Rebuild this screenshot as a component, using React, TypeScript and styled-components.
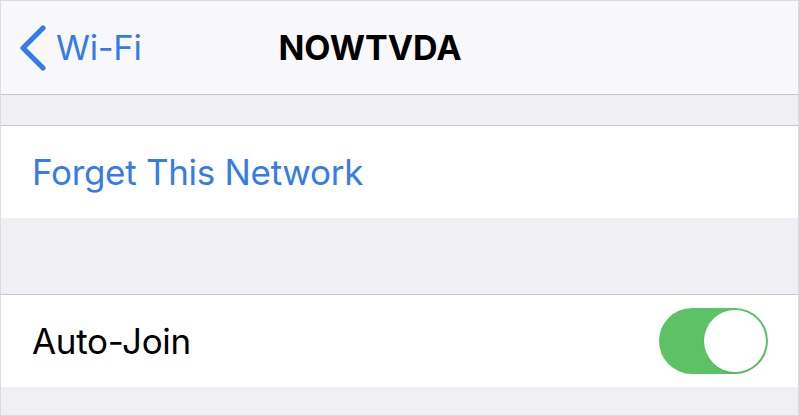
import React from "react";
import styled, { createGlobalStyle } from "styled-components";

const Global = createGlobalStyle`
  html, body { margin: 0; padding: 0; background: #ffffff; }
  body { font-family: Inter, "Noto Sans", Roboto, sans-serif; -webkit-font-smoothing: antialiased; }
`;

const Frame = styled.div`
  width: 799px;
  height: 416px;
  box-sizing: border-box;
  border: 1px solid #dcdce0;
  background: #efeff4;
  display: flex;
  flex-direction: column;
  overflow: hidden;
`;

const NavBar = styled.header`
  height: 93px;
  flex: none;
  background: #f8f8fa;
  border-bottom: 1px solid #c8c7cc;
  display: flex;
  align-items: center;
  padding-left: 18px;
  gap: 137px;
`;

const BackButton = styled.button`
  display: flex;
  align-items: center;
  gap: 7px;
  border: none;
  background: none;
  padding: 0;
  font: inherit;
  color: #367ce8;
  font-size: 34.5px;
  letter-spacing: -0.3px;
  cursor: pointer;
`;

const Title = styled.h1`
  margin: 0;
  font-size: 34px;
  font-weight: 700;
  color: #000;
  letter-spacing: 0;
`;

const Spacer = styled.div<{ $h: number; $line?: boolean }>`
  height: ${(p) => p.$h}px;
  flex: none;
  border-bottom: ${(p) => (p.$line ? "1px solid #c8c7cc" : "none")};
`;

const Row = styled.div`
  height: 92px;
  flex: none;
  background: #fff;
  display: flex;
  align-items: center;
  justify-content: space-between;
  padding: 0 30px 0 31px;
`;

const RowLabel = styled.span<{ $action?: boolean }>`
  font-size: 35px;
  color: ${(p) => (p.$action ? "#367ce8" : "#000")};
  letter-spacing: -0.3px;
`;

const Toggle = styled.div<{ $on: boolean }>`
  width: 109px;
  height: 66px;
  border-radius: 33px;
  background: ${(p) => (p.$on ? "#5dc166" : "#e5e5ea")};
  position: relative;
  flex: none;
`;

const Knob = styled.div<{ $on: boolean }>`
  position: absolute;
  top: 2px;
  left: ${(p) => (p.$on ? "45px" : "2px")};
  width: 62px;
  height: 62px;
  border-radius: 50%;
  background: #fff;
  box-shadow: 0 1px 2px rgba(0, 0, 0, 0.08);
`;

const Chevron = () => (
  <svg width="30" height="46" viewBox="0 0 30 46">
    <path d="M24 3 L4 23 L24 43" fill="none" stroke="#367ce8" strokeWidth="5.2" strokeLinecap="round" strokeLinejoin="round" />
  </svg>
);

export default function App() {
  return (
    <>
      <Global />
      <Frame>
        <NavBar>
          <BackButton>
            <Chevron />
            <span>Wi-Fi</span>
          </BackButton>
          <Title>NOWTVDA</Title>
        </NavBar>
        <Spacer $h={30} $line />
        <Row>
          <RowLabel $action>Forget This Network</RowLabel>
        </Row>
        <Spacer $h={76} $line />
        <Row>
          <RowLabel>Auto-Join</RowLabel>
          <Toggle $on>
            <Knob $on />
          </Toggle>
        </Row>
      </Frame>
    </>
  );
}
